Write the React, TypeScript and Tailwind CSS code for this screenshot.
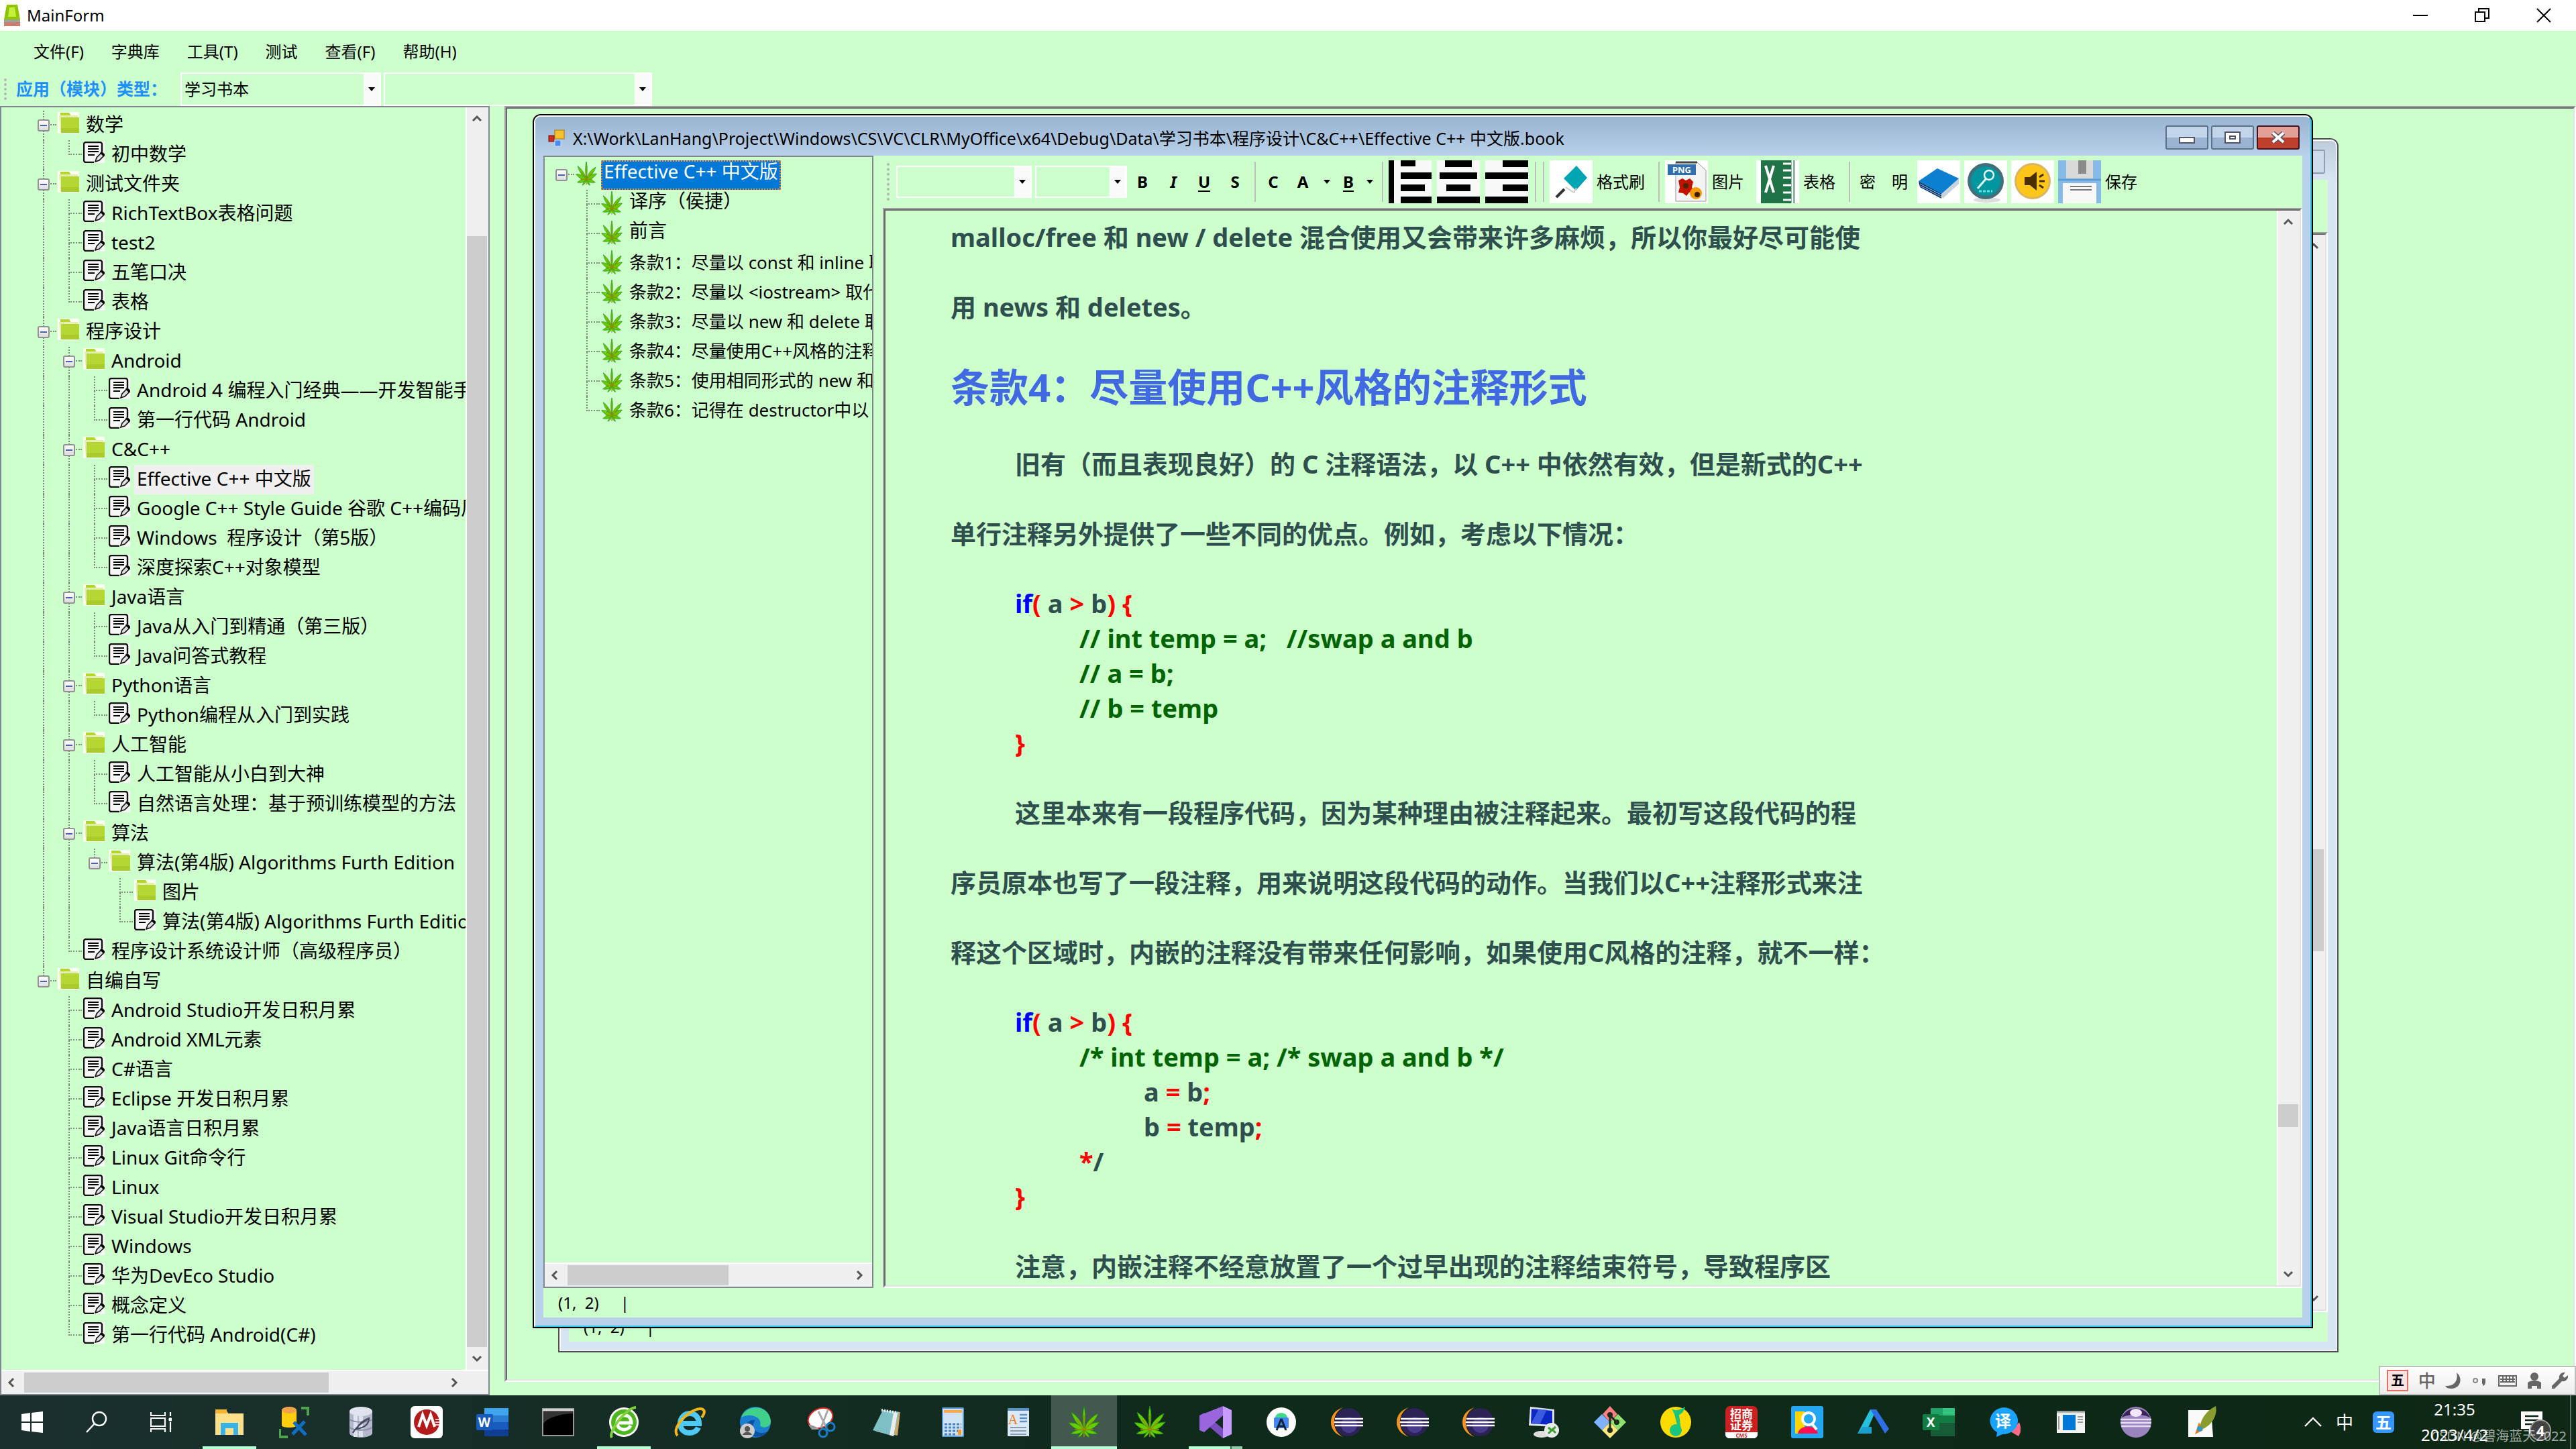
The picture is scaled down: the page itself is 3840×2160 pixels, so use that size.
import type { ReactNode } from "react";

type Kind = "folder" | "doc" | "leaf";

type TreeNode = {
  label: string;
  kind: Kind;
  state?: "marked" | "selected";
  serif?: boolean;
  children?: TreeNode[];
};

type Row = { node: TreeNode; rails: boolean[]; last: boolean; first: boolean };

const doc = (label: string, state?: TreeNode["state"]): TreeNode => ({ label, kind: "doc", state });
const folder = (label: string, children?: TreeNode[]): TreeNode => ({ label, kind: "folder", children });
const leaf = (label: string, serif = false): TreeNode => ({ label, kind: "leaf", serif });

const library: TreeNode[] = [
  folder("数学", [doc("初中数学")]),
  folder("测试文件夹", [doc("RichTextBox表格问题"), doc("test2"), doc("五笔口决"), doc("表格")]),
  folder("程序设计", [
    folder("Android", [doc("Android 4 编程入门经典——开发智能手机应用"), doc("第一行代码 Android")]),
    folder("C&C++", [
      doc("Effective C++ 中文版", "marked"),
      doc("Google C++ Style Guide 谷歌 C++编码风格"),
      doc("Windows  程序设计（第5版）"),
      doc("深度探索C++对象模型"),
    ]),
    folder("Java语言", [doc("Java从入门到精通（第三版）"), doc("Java问答式教程")]),
    folder("Python语言", [doc("Python编程从入门到实践")]),
    folder("人工智能", [doc("人工智能从小白到大神"), doc("自然语言处理：基于预训练模型的方法")]),
    folder("算法", [
      folder("算法(第4版) Algorithms Furth Edition", [
        folder("图片"),
        doc("算法(第4版) Algorithms Furth Edition"),
      ]),
    ]),
    doc("程序设计系统设计师（高级程序员）"),
  ]),
  folder("自编自写", [
    doc("Android Studio开发日积月累"),
    doc("Android XML元素"),
    doc("C#语言"),
    doc("Eclipse 开发日积月累"),
    doc("Java语言日积月累"),
    doc("Linux Git命令行"),
    doc("Linux"),
    doc("Visual Studio开发日积月累"),
    doc("Windows"),
    doc("华为DevEco Studio"),
    doc("概念定义"),
    doc("第一行代码 Android(C#)"),
  ]),
];

const chapters: TreeNode[] = [
  {
    label: "Effective C++ 中文版",
    kind: "leaf",
    state: "selected",
    serif: true,
    children: [
      leaf("译序（侯捷）", true),
      leaf("前言", true),
      leaf("条款1：尽量以 const 和 inline 取代"),
      leaf("条款2：尽量以 <iostream> 取代"),
      leaf("条款3：尽量以 new 和 delete 取代"),
      leaf("条款4：尽量使用C++风格的注释"),
      leaf("条款5：使用相同形式的 new 和"),
      leaf("条款6：记得在 destructor中以"),
    ],
  },
];

function flatten(nodes: TreeNode[], rails: boolean[] = []): Row[] {
  return nodes.flatMap((node, i) => {
    const last = i === nodes.length - 1;
    const row = { node, rails, last, first: i === 0 };
    return [row, ...flatten(node.children ?? [], [...rails, !last])];
  });
}

/* ---------- tree ---------- */

function FolderIcon() {
  return (
    <svg viewBox="0 0 32 32" className="h-8 w-8">
      <rect width="32" height="32" fill="#fbfdf0" />
      <path d="M4 1h13l3 5H4z" fill="#b4d62c" />
      <path d="M2 5h28v25H4z" fill="#e3efb0" />
      <path d="M5 8h27v23H5z" fill="#b5d733" />
      <path d="M5 24h27v7H5z" fill="#aacb2c" />
    </svg>
  );
}

function DocIcon() {
  return (
    <svg viewBox="0 0 32 32" className="h-8 w-8">
      <rect width="32" height="32" fill="#f6f6f6" />
      <path
        d="M28 15V4a3 3 0 0 0-3-3H4a3 3 0 0 0-3 3v24a3 3 0 0 0 3 3h12"
        fill="none"
        stroke="#111"
        strokeWidth="2.4"
      />
      <path d="M7 7h16M7 11h16M7 15h16M7 20h10" stroke="#000" strokeWidth="2" />
      <path d="M18 30l2-6 8-8 4 4-8 8z" fill="#ddd" stroke="#111" strokeWidth="1.6" />
      <path d="M26 16l5 5" stroke="#000" strokeWidth="3" />
    </svg>
  );
}

function LeafIcon({ className }: { className: string }) {
  return (
    <svg viewBox="0 0 48 48" preserveAspectRatio="none" className={className}>
      <g fill="#66cc00" stroke="#1f8a1f" strokeWidth="1">
        <path d="M24 0c3 12 2 24 0 35c-2-11-3-23 0-35z" />
        <path d="M24 35C15 29 8 20 5 9c9 6 16 15 19 26z" />
        <path d="M24 35c9-6 17-13 21-24c-10 5-18 13-21 24z" />
        <path d="M24 36C16 37 8 33 1 25c10-1 18 3 23 11z" />
        <path d="M24 36c8 1 16-3 23-12c-10 0-18 4-23 12z" />
        <path d="M24 36c-6-2-13 0-20 5c8 2 15 0 20-5z" />
        <path d="M24 36c6-2 13 0 20 5c-8 2-15 0-20-5z" />
        <path d="M24 36c-4 2-7 6-9 11c5-2 8-6 9-11zM24 36c4 2 7 6 8 11c-5-2-8-6-8-11z" />
      </g>
      <path d="M24 14v32M13 20l11 16l13-14M10 35h28" stroke="#a08c00" strokeWidth="1.6" fill="none" />
    </svg>
  );
}

function NodeIcon({ kind }: { kind: Kind }) {
  if (kind === "folder") return <FolderIcon />;
  if (kind === "doc") return <DocIcon />;
  return <LeafIcon className="h-9 w-8" />;
}

function Rail({ on }: { on: boolean }) {
  return (
    <span className="flex h-full w-[38px] shrink-0 pl-[18px]">
      {on && <span className="h-full border-l-2 border-dotted border-[#7d8a7d]" />}
    </span>
  );
}

function TreeRow({ node, rails, last, first }: Row) {
  const topless = first && rails.length === 0 && last;
  return (
    <li className="flex h-11 whitespace-pre">
      {rails.map((on, i) => (
        <Rail key={i} on={on} />
      ))}
      <span className="relative flex h-full w-[38px] shrink-0 flex-col pl-[18px]">
        <span
          className={`h-[22px] border-b-2 border-dotted border-[#7d8a7d] ${topless ? "" : "border-l-2"}`}
        />
        {!last && <span className="h-[22px] border-l-2 border-dotted border-[#7d8a7d]" />}
        {node.children && (
          <button
            aria-label={`折叠 ${node.label}`}
            className="absolute top-[13px] left-2.5 flex h-[18px] w-[18px] items-center justify-center rounded-[3px] border-2 border-[#919191] bg-linear-to-b from-white to-[#dcdcdc]"
          >
            <span className="h-0.5 w-2.5 bg-[#4b63a7]" />
          </button>
        )}
      </span>
      <span className="mt-0.5 ml-0.5 h-8 w-8 shrink-0">
        <NodeIcon kind={node.kind} />
      </span>
      {node.serif ? (
        <span
          className={`ml-1.5 h-11 px-1 text-[28px] leading-8 ${
            node.state === "selected" ? "bg-[#0078d7] text-white outline-2 -outline-offset-2 outline-dotted outline-[#ff8728]" : ""
          }`}
        >
          {node.label}
        </span>
      ) : (
        <span
          className={`ml-1.5 h-11 px-1 leading-10 ${node.kind === "leaf" ? "text-[26px]" : "text-[28px]"} ${
            node.state === "marked" ? "bg-[#f0f0f0]" : ""
          }`}
        >
          {node.label}
        </span>
      )}
    </li>
  );
}

function Tree({ nodes, className }: { nodes: TreeNode[]; className: string }) {
  return (
    <ul className={`min-w-0 flex-1 overflow-hidden pt-[5px] ${className}`}>
      {flatten(nodes).map((row, i) => (
        <TreeRow key={i} {...row} />
      ))}
    </ul>
  );
}

/* ---------- common controls ---------- */

const arrows = {
  up: "M4 13l6-6l6 6",
  down: "M4 7l6 6l6-6",
  left: "M13 4l-6 6l6 6",
  right: "M7 4l6 6l-6 6",
};

function ScrollButton({ dir }: { dir: keyof typeof arrows }) {
  return (
    <button aria-label={dir} className="flex h-[34px] w-[30px] shrink-0 items-center justify-center">
      <svg viewBox="0 0 20 20" className="h-5 w-5">
        <path d={arrows[dir]} fill="none" stroke="#555" strokeWidth="3" />
      </svg>
    </button>
  );
}

function Combo({ label, value, className }: { label: string; value: string; className: string }) {
  return (
    <span className={`flex shrink-0 border-2 border-white ${className}`}>
      <select aria-label={label} className="min-w-0 flex-1 appearance-none bg-transparent pl-1 text-[24px] outline-none">
        <option>{value}</option>
      </select>
      <span className="pointer-events-none flex w-6 items-center justify-center bg-[#fafafa]">
        <Caret />
      </span>
    </span>
  );
}

function Caret() {
  return (
    <svg viewBox="0 0 10 6" className="h-1.5 w-2.5">
      <path d="M0 0h10L5 6z" />
    </svg>
  );
}

function Grip({ className }: { className: string }) {
  return <span className={`shrink-0 border-l-4 border-dotted border-[#b5b5b5] ${className}`} />;
}

/* ---------- editor toolbar ---------- */

function AlignIcon({ bars }: { bars: [number, number][] }) {
  return (
    <svg viewBox="0 0 64 64" className="h-16 w-16 bg-[#f8f8f8]">
      {bars.map(([x, w], i) => (
        <rect key={i} x={x} y={[0, 18, 36, 54][i]} width={w} height="10" />
      ))}
    </svg>
  );
}

function BrushIcon() {
  return (
    <svg viewBox="0 0 64 64" className="h-16 w-16 bg-white">
      <path d="M40 8l16 18l-17 19l-18-18z" fill="#00a5b4" />
      <path d="M24 40l12 8l4-7" fill="none" stroke="#ccc" strokeWidth="2" />
      <path d="M22 43L10 55" stroke="#333" strokeWidth="4" />
    </svg>
  );
}

function PngIcon() {
  return (
    <svg viewBox="0 0 64 64" className="h-16 w-16 bg-white">
      <path d="M16 3h32l13 12v46H16z" fill="#f3f3f3" stroke="#999" />
      <path d="M16 3h32" stroke="#444" strokeWidth="3" />
      <rect x="4" y="6" width="42" height="16" fill="#2f6fb0" />
      <text x="25" y="19" textAnchor="middle" fontSize="13" fontWeight="bold" fill="#fff">
        PNG
      </text>
      <path d="M20 30l6-3l5 3l6-3l5 5l-2 8l3 6l-7 2l-4 5l-5-4l-7-1l2-8z" fill="#c41200" />
      <circle cx="31" cy="38" r="4" fill="#4a2500" />
      <circle cx="46" cy="49" r="9" fill="#f59b00" />
      <circle cx="48" cy="51" r="4" fill="#3b2000" />
    </svg>
  );
}

function SheetIcon() {
  return (
    <svg viewBox="0 0 64 64" className="h-16 w-16 bg-white">
      <path d="M7 0h50v64H7z" fill="#1f7346" />
      <path d="M40 5h12M40 15h12M40 26h12M40 37h12M40 48h12M40 59h12M54 0v64" stroke="#fff" strokeWidth="3" />
      <path d="M14 8l12 40M26 8L14 48" stroke="#fff" strokeWidth="4" />
    </svg>
  );
}

function BookIcon() {
  return (
    <svg viewBox="0 0 64 64" className="h-16 w-16 bg-white">
      <path d="M2 31l34 18v8L4 40z" fill="#0a3a70" />
      <path d="M36 49l26-22v8L38 57z" fill="#c9d3dd" />
      <path d="M30 12l32 15l-26 23L2 31z" fill="#0c7fd0" />
      <path d="M4 35l33 17M4 38l33 17" stroke="#9db7d1" />
    </svg>
  );
}

function SearchIcon() {
  return (
    <svg viewBox="0 0 64 64" className="h-16 w-16 bg-white">
      <ellipse cx="34" cy="59" rx="20" ry="4" fill="#ddd" />
      <circle cx="32" cy="31" r="27" fill="#41707a" />
      <circle cx="32" cy="31" r="22" fill="#00969f" />
      <circle cx="37" cy="22" r="7" fill="none" stroke="#e8ffff" strokeWidth="2.5" />
      <path d="M32 28L20 42" stroke="#e8ffff" strokeWidth="3" />
      <path d="M22 46h20" stroke="#6be0e4" strokeWidth="3" strokeDasharray="4 2" />
    </svg>
  );
}

function SoundIcon() {
  return (
    <svg viewBox="0 0 64 64" className="h-16 w-16 bg-white">
      <circle cx="32" cy="31" r="27" fill="#d9b562" />
      <circle cx="32" cy="31" r="24" fill="#ffc61a" />
      <path d="M20 25h8l10-8v28l-10-8h-8z" fill="#4a3000" />
      <path d="M42 25l6-4M42 31h8M42 37l6 4" stroke="#4a3000" strokeWidth="3" />
    </svg>
  );
}

function SaveIcon() {
  return (
    <svg viewBox="0 0 64 64" className="h-16 w-16">
      <rect width="64" height="64" fill="#86bbe8" />
      <rect x="12" width="40" height="27" fill="#d9d9d9" />
      <rect x="30" width="12" height="20" fill="#8b8b8b" />
      <rect x="7" y="34" width="50" height="30" fill="#f8f8f8" />
      <path d="M18 39h32M18 44h32" stroke="#777" strokeWidth="2" />
      <path d="M0 29h64" stroke="#5f9fd6" strokeWidth="3" />
    </svg>
  );
}

function Sep({ className }: { className: string }) {
  return <span className={`h-[60px] w-0.5 shrink-0 bg-[#bdbdbd] ${className}`} />;
}

function Tool({ icon, text, className = "" }: { icon: ReactNode; text?: string; className?: string }) {
  return (
    <button className={`flex shrink-0 items-center gap-1.5 ${className}`} aria-label={text ?? "工具"}>
      {icon}
      {text}
    </button>
  );
}

function EditorToolbar() {
  return (
    <div className="flex h-[78px] shrink-0 items-center overflow-hidden text-[24px] whitespace-nowrap">
      <Grip className="ml-1.5 h-14" />
      <Combo label="字体" value="" className="ml-2.5 h-12 w-[202px]" />
      <Combo label="字号" value="" className="ml-[5px] h-12 w-[137px]" />
      {["B", "I", "U", "S"].map((t) => (
        <button
          key={t}
          className={`w-[46px] font-bold ${t === "I" ? "italic" : ""} ${t === "U" ? "underline underline-offset-4" : ""}`}
        >
          {t}
        </button>
      ))}
      <Sep className="mx-1.5" />
      <button className="w-10 font-bold">C</button>
      <button className="w-12 font-bold">A</button>
      <button aria-label="文字颜色" className="flex w-6 justify-center">
        <Caret />
      </button>
      <button className="w-10 font-bold underline underline-offset-4">B</button>
      <button aria-label="背景颜色" className="flex w-6 justify-center">
        <Caret />
      </button>
      <Sep className="mx-1.5" />
      <div className="ml-0.5 flex gap-2">
        <Tool
          icon={
            <span className="flex border-l-8 border-black">
              <svg viewBox="0 0 56 64" className="h-16 w-14 bg-[#f8f8f8]">
                <path d="M10 0h22v9H10zM10 18h46v10H10zM10 36h36v10H10zM10 54h46v10H10z" />
              </svg>
            </span>
          }
        />
        <Tool icon={<AlignIcon bars={[[12, 40], [4, 56], [14, 36], [0, 64]]} />} />
        <Tool icon={<AlignIcon bars={[[26, 38], [0, 64], [26, 38], [0, 64]]} />} />
      </div>
      <Sep className="ml-2.5" />
      <Sep className="ml-2.5" />
      <Tool icon={<BrushIcon />} text="格式刷" className="ml-2" />
      <Sep className="ml-5" />
      <Tool icon={<PngIcon />} text="图片" className="ml-2" />
      <Tool icon={<SheetIcon />} text="表格" className="ml-[18px]" />
      <Sep className="ml-5" />
      <button className="ml-3.5">密</button>
      <button className="ml-6">明</button>
      <div className="ml-3.5 flex gap-1.5">
        <Tool icon={<BookIcon />} />
        <Tool icon={<SearchIcon />} />
        <Tool icon={<SoundIcon />} />
        <Tool icon={<SaveIcon />} text="保存" />
      </div>
    </div>
  );
}

/* ---------- book text ---------- */

const tones = {
  plain: "",
  key: "text-[#0000ff]",
  op: "text-[#ff0000]",
  note: "text-[#006400]",
};

type Span = [string, keyof typeof tones];

const indents = ["", "pl-24", "pl-48", "pl-72"];

function Line({ spans, indent = 0, wide = false }: { spans: Span[]; indent?: number; wide?: boolean }) {
  return (
    <p className={`h-[52px] text-[38px] leading-[52px] ${indents[indent]} ${wide ? "mt-[52px]" : ""}`}>
      {spans.map(([text, tone], i) => (
        <span key={i} className={tones[tone]}>
          {text}
        </span>
      ))}
    </p>
  );
}

const ifLine: Span[] = [
  ["if", "key"],
  ["(", "op"],
  [" a ", "plain"],
  [">", "op"],
  [" b", "plain"],
  [") {", "op"],
];

function BookText() {
  return (
    <article className="min-w-0 flex-1 overflow-hidden pt-[13px] pl-[97px] font-bold whitespace-pre text-[#2f4f4f]">
      <Line spans={[["malloc/free 和 new / delete 混合使用又会带来许多麻烦，所以你最好尽可能使", "plain"]]} />
      <Line wide spans={[["用 news 和 deletes。", "plain"]]} />
      <h1 className="mt-[58px] h-[72px] text-[58px] leading-[72px] text-[#4169e1]">条款4：尽量使用C++风格的注释形式</h1>
      <Line wide indent={1} spans={[["旧有（而且表现良好）的 C 注释语法，以 C++ 中依然有效，但是新式的C++", "plain"]]} />
      <Line wide spans={[["单行注释另外提供了一些不同的优点。例如，考虑以下情况：", "plain"]]} />
      <Line wide indent={1} spans={ifLine} />
      <Line indent={2} spans={[["// int temp = a;   //swap a and b", "note"]]} />
      <Line indent={2} spans={[["// a = b;", "note"]]} />
      <Line indent={2} spans={[["// b = temp", "note"]]} />
      <Line indent={1} spans={[["}", "op"]]} />
      <Line wide indent={1} spans={[["这里本来有一段程序代码，因为某种理由被注释起来。最初写这段代码的程", "plain"]]} />
      <Line wide spans={[["序员原本也写了一段注释，用来说明这段代码的动作。当我们以C++注释形式来注", "plain"]]} />
      <Line wide spans={[["释这个区域时，内嵌的注释没有带来任何影响，如果使用C风格的注释，就不一样：", "plain"]]} />
      <Line wide indent={1} spans={ifLine} />
      <Line indent={2} spans={[["/* int temp = a; /* swap a and b */", "note"]]} />
      <Line indent={3} spans={[["a ", "plain"], ["=", "op"], [" b", "plain"], [";", "op"]]} />
      <Line indent={3} spans={[["b ", "plain"], ["=", "op"], [" temp", "plain"], [";", "op"]]} />
      <Line indent={2} spans={[["*", "op"], ["/", "plain"]]} />
      <Line indent={1} spans={[["}", "op"]]} />
      <Line wide indent={1} spans={[["注意，内嵌注释不经意放置了一个过早出现的注释结束符号，导致程序区", "plain"]]} />
    </article>
  );
}

/* ---------- MDI windows ---------- */

function Sunken({ children, className = "" }: { children: ReactNode; className?: string }) {
  return (
    <div className={`flex border-2 border-t-[#a0a0a0] border-r-white border-b-white border-l-[#a0a0a0] ${className}`}>
      <div className="relative flex min-w-0 flex-1 border-2 border-t-[#696969] border-r-[#e3e3e3] border-b-[#e3e3e3] border-l-[#696969]">
        {children}
      </div>
    </div>
  );
}

function FormIcon() {
  return (
    <svg viewBox="0 0 28 28" className="mt-1.5 h-7 w-7">
      <rect x="11" y="2" width="14" height="13" fill="#f6c12c" stroke="#a87500" />
      <rect x="2" y="10" width="8" height="9" fill="#cc2a1c" stroke="#7c0e06" />
      <rect x="11" y="17" width="9" height="9" fill="#4d8bf0" stroke="#c9dcff" />
    </svg>
  );
}

function CaptionButtons({ active }: { active: boolean }) {
  const base = "flex h-9 w-16 items-center justify-center rounded-[3px] border-2";
  const blue = active
    ? "border-[#5d7089] bg-linear-to-b from-[#c3d5ea] from-50% to-[#9ab4d2] to-50%"
    : "border-[#8e9fb5] bg-[#cddbeb]";
  const red = active ? "border-[#431422] bg-linear-to-b from-[#e3a096] from-50% to-[#bd3f2c] to-50%" : blue;
  return (
    <div className="mt-1 flex gap-1">
      <button aria-label="最小化" className={`${base} ${blue}`}>
        <span className="mt-2 h-2.5 w-6 border-2 border-[#535666] bg-white" />
      </button>
      <button aria-label="还原" className={`${base} ${blue}`}>
        <span className="flex h-[18px] w-6 items-center justify-center border-2 border-[#535666] bg-white">
          <span className="h-1.5 w-2.5 border-2 border-[#535666]" />
        </span>
      </button>
      <button aria-label="关闭" className={`${base} ${red}`}>
        <svg viewBox="0 0 24 18" className="h-[18px] w-6">
          <path d="M4 2l16 14M20 2L4 16" stroke="#535666" strokeWidth="7" />
          <path d="M4 2l16 14M20 2L4 16" stroke="#fff" strokeWidth="4" />
        </svg>
      </button>
    </div>
  );
}

function BookWindow({ active, className, children }: { active: boolean; className: string; children: ReactNode }) {
  return (
    <section
      className={`absolute flex flex-col rounded-t-xl border-2 ${active ? "border-black bg-[#b9d1ea]" : "border-[#4f4f4f] bg-[#d7e4f2]"} ${className}`}
    >
      <div
        className={`flex min-h-0 flex-1 flex-col rounded-t-[10px] border-2 border-t-white border-l-white ${
          active ? "border-r-[#28c8e8] border-b-[#28c8e8]" : "border-r-[#eaf1f8] border-b-[#eaf1f8]"
        }`}
      >
        <header
          className={`flex h-[58px] shrink-0 items-center rounded-t-lg pr-4 pl-[18px] ${
            active ? "bg-linear-to-b from-[#99b4d1] to-[#b9d1ea]" : "bg-linear-to-b from-[#bfcddb] to-[#d7e4f2]"
          }`}
        >
          <FormIcon />
          <h2 className="mt-2 ml-2.5 min-w-0 flex-1 truncate text-[25px]">
            X:\Work\LanHang\Project\Windows\CS\VC\CLR\MyOffice\x64\Debug\Data\学习书本\程序设计\C&amp;C++\Effective C++
            中文版.book
          </h2>
          <CaptionButtons active={active} />
        </header>
        <div className="mx-3 mb-3 flex min-h-0 flex-1 flex-col bg-[#ccffcc]">
          <div className="flex min-h-0 flex-1 gap-3.5">{children}</div>
          <footer className="flex h-11 shrink-0 items-center gap-8 pl-[22px] text-[24px] whitespace-pre">
            <span>(1,  2)</span>
            <span>|</span>
          </footer>
        </div>
      </div>
    </section>
  );
}

function EditorScroll({ gap, thumb }: { gap: string; thumb: string }) {
  return (
    <div className="flex w-[34px] shrink-0 flex-col border-l-2 border-white bg-[#f0f0f0]">
      <ScrollButton dir="up" />
      <div className="flex-1">
        <div className={gap} />
        <div className={`w-[30px] bg-[#cdcdcd] ${thumb}`} />
      </div>
      <ScrollButton dir="down" />
    </div>
  );
}

function Workspace() {
  return (
    <Sunken className="mb-5 ml-[22px] min-w-0 flex-1">
      <BookWindow active={false} className="top-11 right-[350px] bottom-10 left-[76px]">
        <div className="flex flex-1 flex-col pt-[78px]">
          <Sunken className="min-h-0 flex-1">
            <div className="flex-1" />
            <EditorScroll gap="h-[882px]" thumb="h-[152px]" />
          </Sunken>
        </div>
      </BookWindow>
      <BookWindow active className="top-2 right-[388px] bottom-[76px] left-[38px]">
        <aside className="flex w-[492px] shrink-0 flex-col border-2 border-[#828790]">
          <Tree nodes={chapters} className="pl-1.5" />
          <div className="flex h-9 shrink-0 items-center border-t-2 border-white bg-[#f0f0f0]">
            <ScrollButton dir="left" />
            <div className="ml-1 h-[30px] w-[240px] bg-[#cdcdcd]" />
            <div className="flex-1" />
            <ScrollButton dir="right" />
            <div className="w-1" />
          </div>
        </aside>
        <div className="flex min-w-0 flex-1 flex-col">
          <EditorToolbar />
          <Sunken className="min-h-0 flex-1">
            <BookText />
            <EditorScroll gap="h-[1298px]" thumb="h-[34px]" />
          </Sunken>
        </div>
      </BookWindow>
    </Sunken>
  );
}

/* ---------- taskbar ---------- */

function Eclipse() {
  return (
    <>
      <path d="M18 2C6 6 0 14 0 24s6 18 18 22C8 40 5 33 5 24S8 8 18 2z" fill="#f7941e" />
      <circle cx="26" cy="24" r="21" fill="#2c2255" />
      <circle cx="27" cy="28" r="12" fill="#463a8c" />
      <path d="M6 19h42M5 24h43M6 29h42" stroke="#fff" strokeWidth="2.6" />
    </>
  );
}

const hemp = <LeafIcon className="h-12 w-12" />;

const apps: { name: string; art: ReactNode; run?: "bar" | "active" | "multi" }[] = [
  {
    name: "文件资源管理器",
    run: "bar",
    art: (
      <>
        <path d="M3 7h17l2 4h23v32H3z" fill="#ffe08a" />
        <path d="M3 5h17v6H3z" fill="#f3b52c" />
        <path d="M11 43V25h26v18h-7V33H18v10z" fill="#37b3ea" />
      </>
    ),
  },
  {
    name: "数据库工具",
    art: (
      <>
        <path d="M4 5v24c0 4 22 4 22 0V5z" fill="#ffcf0d" />
        <ellipse cx="15" cy="6" rx="11" ry="5" fill="#f1a24d" />
        <path d="M33 3h10v11M1 34v12h12" fill="none" stroke="#4ca34c" strokeWidth="4" />
        <path d="M20 42l18-19M22 24l18 19" stroke="#0f6fc0" strokeWidth="5" />
      </>
    ),
  },
  {
    name: "SQLite",
    art: (
      <>
        <path d="M7 8v32c0 9 34 9 34 0V8z" fill="#b4b8cc" />
        <path d="M16 12v34M24 12v34" stroke="#dfe1ee" strokeWidth="6" />
        <ellipse cx="24" cy="8" rx="17" ry="7" fill="#e0e2ee" />
        <path d="M7 20c8 5 26 5 34 0M7 32c8 5 26 5 34 0" stroke="#8b90a6" strokeWidth="2" fill="none" />
        <path d="M12 40c4-8 12-14 24-22M18 34c2-6 8-12 18-16c0 8-6 14-18 16z" fill="none" stroke="#474d60" strokeWidth="2.2" />
      </>
    ),
  },
  {
    name: "招商银行",
    art: (
      <>
        <rect width="48" height="48" rx="6" fill="#fff" />
        <circle cx="24" cy="24" r="19" fill="#b51a1a" />
        <path d="M12 31l6-18l6 16l6-16l6 18" stroke="#fff" strokeWidth="4" fill="none" />
        <path d="M37 20h6M37 24h7M37 28h6" stroke="#fff" strokeWidth="1.5" />
      </>
    ),
  },
  {
    name: "Word",
    art: (
      <>
        <path d="M12 3h36v11H12z" fill="#41a5ee" />
        <path d="M12 14h36v10H12z" fill="#2b7cd3" />
        <path d="M12 24h36v11H12z" fill="#185abd" />
        <path d="M12 35h36v10H12z" fill="#103f91" />
        <rect y="12" width="25" height="24" rx="2" fill="#185abd" />
        <text x="12" y="31" textAnchor="middle" fontSize="19" fontWeight="bold" fill="#fff">
          W
        </text>
      </>
    ),
  },
  {
    name: "命令提示符",
    art: (
      <>
        <rect x="1" y="4" width="46" height="40" fill="#000" stroke="#999" strokeWidth="2" />
        <path d="M1 6h46" stroke="#ddd" strokeWidth="3" />
        <path d="M2 26C10 16 28 12 46 11V8H2z" fill="#333" />
      </>
    ),
  },
  {
    name: "360浏览器",
    run: "bar",
    art: (
      <>
        <circle cx="24" cy="24" r="22" fill="#fff" />
        <circle cx="24" cy="24" r="19" fill="#4db61c" />
        <path d="M14 25h21c0-16-21-14-21 0c0 12 16 13 20 4" stroke="#fff" strokeWidth="5" fill="none" />
        <path d="M6 47C0 38 28 2 42 2" stroke="#7fd23a" strokeWidth="4" fill="none" />
      </>
    ),
  },
  {
    name: "Internet Explorer",
    art: (
      <>
        <path d="M11 26h27c0-21-28-19-28 0c0 17 22 18 27 6" stroke="#4ec8f5" strokeWidth="8" fill="none" />
        <path d="M6 44C-6 32 30-2 44 5c4 3 1 8-2 12" stroke="#f3b51c" strokeWidth="4" fill="none" />
      </>
    ),
  },
  {
    name: "Edge",
    art: (
      <>
        <circle cx="24" cy="24" r="23" fill="#1b7fd0" />
        <path d="M3 17C9-3 44-4 47 22c1 10-12 12-16 7c4-12-14-20-28-12z" fill="#3fd08a" />
        <path d="M24 21c-10 12 4 24 18 17c-8 12-30 10-32-6c0-8 6-12 14-11z" fill="#0c50a0" />
        <circle cx="12" cy="37" r="11" fill="#ccc" />
        <circle cx="12" cy="34" r="4" fill="#555" />
        <path d="M5 43c2-6 12-6 14 0z" fill="#555" />
      </>
    ),
  },
  {
    name: "截图工具",
    art: (
      <>
        <ellipse cx="23" cy="18" rx="19" ry="14" fill="#fff" stroke="#d93025" strokeWidth="2" transform="rotate(-25 23 18)" />
        <path d="M5 28c8 0 14 4 16 7H10z" fill="#999" />
        <path d="M20 8l12 24M34 6L24 32" stroke="#aaa" strokeWidth="3" />
        <circle cx="38" cy="31" r="6" fill="none" stroke="#1a7dc8" strokeWidth="3" />
        <circle cx="27" cy="40" r="6" fill="none" stroke="#1a7dc8" strokeWidth="3" />
      </>
    ),
  },
  {
    name: "记事本",
    art: (
      <>
        <path d="M18 6l26 3l-4 35l-32-6z" fill="#c9a568" />
        <path d="M18 6l24 3l-8 36L3 36z" fill="#7fbfc6" />
        <path d="M16 6l24 4" stroke="#eee" strokeWidth="4" strokeDasharray="2 2" />
        <path d="M34 10l6 0l-6 35l-6-2z" fill="#e8eeee" />
      </>
    ),
  },
  {
    name: "计算器",
    art: (
      <>
        <rect x="8" y="2" width="33" height="44" rx="2" fill="#5b9bd5" />
        <rect x="10" y="4" width="29" height="40" fill="#cfe3f5" />
        <rect x="11" y="6" width="27" height="4" fill="#f7a94b" />
        <path d="M12 27h25M12 32h25M12 37h25M12 42h18" stroke="#4c84bd" strokeWidth="3" strokeDasharray="4 2" />
        <rect x="32" y="35" width="5" height="8" fill="#f59b2c" />
      </>
    ),
  },
  {
    name: "写字板",
    art: (
      <>
        <path d="M8 3h32v42H8z" fill="#dbe8f5" />
        <path d="M8 3h32v4H8z" fill="#5b93c9" />
        <text x="16" y="27" textAnchor="middle" fontSize="20" fontFamily="Liberation Serif" fill="#f07f13">
          A
        </text>
        <path d="M26 13h11M26 18h11M26 23h11" stroke="#5b93c9" strokeWidth="2.4" />
        <path d="M12 32h24M12 37h24M12 42h24" stroke="#8a9cad" strokeWidth="2" />
      </>
    ),
  },
  { name: "MyOffice", run: "active", art: hemp },
  { name: "MyOffice 2", art: hemp },
  {
    name: "Visual Studio",
    run: "multi",
    art: (
      <>
        <path d="M0 14l7-4l28 24V48L0 18z" fill="#7b4fc0" />
        <path d="M0 14v22l7 3L35 14V0z" fill="#9a66dd" />
        <path d="M35 0l13 6v36l-13 6z" fill="#c79bff" />
      </>
    ),
  },
  {
    name: "Android Studio",
    art: (
      <>
        <circle cx="24" cy="24" r="22" fill="#fff" />
        <path d="M15 17c1-9 17-9 18 0z" fill="#3ddc84" />
        <rect x="13" y="17" width="22" height="16" rx="2" fill="#4285f4" />
        <path d="M24 19l-7 17M24 19l7 17M19 30h10" stroke="#123" strokeWidth="3" fill="none" />
      </>
    ),
  },
  { name: "Eclipse", art: <Eclipse /> },
  { name: "Eclipse 2", art: <Eclipse /> },
  { name: "Eclipse 3", art: <Eclipse /> },
  {
    name: "远程桌面",
    art: (
      <>
        <path d="M3 1l36 4v26L1 29z" fill="#dfe3ea" />
        <path d="M5 4l31 3v21L4 26z" fill="#0b26c4" />
        <path d="M16 4l12 1l-10 21l-13-1z" fill="#5b7ef0" opacity="0.6" />
        <ellipse cx="20" cy="42" rx="12" ry="5" fill="#ddd" />
        <circle cx="35" cy="36" r="11" fill="#e9ebe9" />
        <path d="M30 32l5 4l-5 5M41 31l-5 4l5 5" stroke="#3ca02e" strokeWidth="3" fill="none" />
      </>
    ),
  },
  {
    name: "Git",
    art: (
      <>
        <path d="M24 0l11 12l-11 12L13 12z" fill="#ff7f7f" />
        <path d="M12 12l12 12l-12 12L0 24z" fill="#80b3ff" />
        <path d="M36 12l12 12l-12 12l-12-12z" fill="#8fe070" />
        <path d="M24 24l12 12l-12 12l-12-12z" fill="#ffe680" />
        <path d="M24 12v24M24 14l10 10" stroke="#1b2a1b" strokeWidth="3" />
        <circle cx="24" cy="13" r="4" fill="#1b2a1b" />
        <circle cx="24" cy="36" r="4" fill="#1b2a1b" />
        <circle cx="34" cy="24" r="4" fill="#1b2a1b" />
      </>
    ),
  },
  {
    name: "QQ音乐",
    art: (
      <>
        <circle cx="24" cy="24" r="23" fill="#ffdc00" />
        <path d="M18 4c6 4 12 2 20-3c-1 7-6 11-9 12l3 23h-4L22 12z" fill="#1ac481" />
        <circle cx="24" cy="36" r="9" fill="#1ac481" />
      </>
    ),
  },
  {
    name: "招商证券",
    art: (
      <>
        <rect width="48" height="48" rx="7" fill="#cc1f1f" />
        <path d="M0 39h48v3c0 4-3 6-6 6H6c-3 0-6-2-6-6z" fill="#fff" />
        <g fontSize="17" fontWeight="bold" fill="#fff" textAnchor="middle">
          <text x="24" y="18">招商</text>
          <text x="24" y="35">证券</text>
        </g>
        <text x="24" y="47" fontSize="8" fontWeight="bold" fill="#cc1f1f" textAnchor="middle">
          CMS
        </text>
      </>
    ),
  },
  {
    name: "远程协助",
    art: (
      <>
        <rect width="48" height="48" rx="3" fill="#22a7f0" />
        <path d="M6 8h14v33H6z" fill="#ffd400" />
        <path d="M10 41c2-14 28-14 30 0z" fill="#ff0f4f" />
        <circle cx="26" cy="19" r="9" fill="#22a7f0" stroke="#fff" strokeWidth="4" />
        <path d="M31 26l7 9" stroke="#fff" strokeWidth="4" />
      </>
    ),
  },
  {
    name: "阿里云盘",
    art: (
      <>
        <path d="M20 5h9L13 41H1z" fill="#27c1e0" />
        <path d="M20 5h9l19 29l-6 7z" fill="#2f6fe6" />
        <path d="M1 41l8-10h13v10z" fill="#1aa0d0" />
      </>
    ),
  },
  {
    name: "Excel",
    art: (
      <>
        <path d="M12 3h18v11H12z" fill="#21a366" />
        <path d="M30 3h18v11H30z" fill="#33c481" />
        <path d="M12 14h36v11H12z" fill="#107c41" />
        <path d="M12 25h36v20H12z" fill="#185c37" />
        <rect y="12" width="25" height="24" rx="2" fill="#107c41" />
        <text x="12" y="31" textAnchor="middle" fontSize="19" fontWeight="bold" fill="#fff">
          X
        </text>
      </>
    ),
  },
  {
    name: "翻译",
    art: (
      <>
        <path d="M46 24c4 10 2 16-1 21l-12-7z" fill="#ff6b86" />
        <path d="M23 2a22 20 0 1 1-2 40l-9 4l1-7A22 20 0 0 1 23 2z" fill="#1aa3ff" />
        <text x="22" y="31" textAnchor="middle" fontSize="24" fontWeight="bold" fill="#fff">
          译
        </text>
      </>
    ),
  },
  {
    name: "窗口工具",
    art: (
      <>
        <rect x="4" y="8" width="42" height="32" fill="#f4f4f4" />
        <path d="M4 9h42" stroke="#bbb" strokeWidth="3" />
        <rect x="13" y="13" width="19" height="23" fill="#0078d7" />
        <path d="M7 15v20M35 16h8M35 20h8M35 24h8" stroke="#999" strokeWidth="2" />
      </>
    ),
  },
  {
    name: "Eclipse 旧版",
    art: (
      <>
        <circle cx="24" cy="24" r="23" fill="#9a84bf" />
        <path d="M3 17a23 23 0 0 1 42 0c-12-6-30-6-42 0z" fill="#3a2458" />
        <ellipse cx="24" cy="10" rx="9" ry="6" fill="#f0e8fa" />
        <path d="M1 20h46M1 25h46M2 30h44" stroke="#e7def5" strokeWidth="2.4" />
      </>
    ),
  },
  {
    name: "编辑器",
    art: (
      <>
        <path d="M4 6h34l3 40H4z" fill="#fafafa" />
        <path d="M45 0c3 14-6 30-24 36c0-14 8-28 24-36z" fill="#8a9c2e" />
        <path d="M20 24l6 12l-12 6z" fill="#f07a1a" />
        <circle cx="21" cy="34" r="4" fill="#2b9bd0" />
      </>
    ),
  },
];

function TaskButton({ name, art, run }: (typeof apps)[number]) {
  return (
    <button
      aria-label={name}
      className={`flex h-20 w-[98px] shrink-0 flex-col items-center justify-start pt-4 ${run === "active" ? "bg-[#43584e]" : ""}`}
    >
      {art === hemp ? (
        hemp
      ) : (
        <svg viewBox="0 0 48 48" className="h-12 w-12">
          {art}
        </svg>
      )}
      {run && (
        <span className={`mt-3 flex h-1 bg-[#b4ffd5] ${run === "active" ? "w-full" : "w-20"}`}>
          {run === "multi" && <span className="ml-auto w-[18px] border-l-2 border-[#3d6b52] bg-[#8ecba8]" />}
        </span>
      )}
    </button>
  );
}

function ImeBar() {
  return (
    <div className="absolute right-0 bottom-20 flex h-11 w-[294px] items-center justify-between border-2 border-[#bdbdbd] bg-linear-to-b from-white to-[#ececec] px-2.5 text-[26px] font-medium text-[#666]">
      <span className="flex h-8 w-8 items-center justify-center border-2 border-[#e07060] bg-[#f6e4e4] text-[20px] font-bold text-black">
        五
      </span>
      <span>中</span>
      <svg viewBox="0 0 24 24" className="h-6 w-6" fill="#666">
        <path d="M17 0c10 8 6 24-8 24c-4 0-7-1-9-4c12 1 20-6 17-20z" />
      </svg>
      <svg viewBox="0 0 24 24" className="h-6 w-6" fill="#666">
        <circle cx="6" cy="12" r="3" fill="none" stroke="#888" strokeWidth="2" />
        <path d="M16 9h5v5c0 3-1 5-4 6v-3h-1z" />
      </svg>
      <svg viewBox="0 0 30 20" className="h-5 w-[30px]" fill="none" stroke="#666" strokeWidth="2">
        <path d="M2 3h26v15H2zM4 8h22M4 12h22M8 3v10M13 3v10M18 3v10M23 3v10" />
      </svg>
      <svg viewBox="0 0 22 24" className="h-6 w-[22px]" fill="#666">
        <circle cx="11" cy="6" r="6" />
        <path d="M1 24V15c4-4 16-4 20 0v9h-6v-4H7v4z" />
      </svg>
      <svg viewBox="0 0 24 24" className="h-6 w-6" fill="#666">
        <path d="M0 20L11 9c-1-6 4-10 9-9l-4 5l3 3l5-4c1 6-4 10-9 9L4 24H0z" />
      </svg>
    </div>
  );
}

function Taskbar() {
  return (
    <footer className="flex h-20 shrink-0 overflow-hidden bg-linear-to-r from-[#1b302f] via-[#0e2a1a] to-[#0e2815] text-white">
      <div className="mr-[5px] flex">
        <button aria-label="开始" className="flex w-24 items-center justify-center">
          <svg viewBox="0 0 32 32" className="h-8 w-8" fill="#fff">
            <path d="M0 4l13-2v13H0zM15 2l17-2v15H15zM0 17h13v13L0 28zM15 17h17v15l-17-2z" />
          </svg>
        </button>
        <button aria-label="搜索" className="flex w-24 items-center justify-center">
          <svg viewBox="0 0 32 32" className="h-8 w-8" fill="none" stroke="#fff" strokeWidth="2.4">
            <circle cx="20" cy="11" r="10" />
            <path d="M13 18L1 31" />
          </svg>
        </button>
        <button aria-label="任务视图" className="flex w-24 items-center justify-center">
          <svg viewBox="0 0 32 32" className="h-8 w-8" fill="none" stroke="#fff" strokeWidth="2.2">
            <path d="M1 1v5h21V1M1 31v-5h21v5M1 10h21v12H1zM30 1v6M30 16v15" />
            <circle cx="30" cy="12" r="1.6" fill="#fff" />
          </svg>
        </button>
      </div>
      {apps.map((app) => (
        <TaskButton key={app.name} {...app} />
      ))}
      <div className="relative ml-auto flex items-center pr-[7px]">
        <button aria-label="显示隐藏的图标" className="mr-5">
          <svg viewBox="0 0 26 16" className="h-4 w-[26px]" fill="none" stroke="#fff" strokeWidth="2.4">
            <path d="M1 14L13 2l12 12" />
          </svg>
        </button>
        <button className="mr-7 w-7 text-[26px]">中</button>
        <button className="mr-8 flex h-8 w-8 items-center justify-center rounded-md bg-[#3597ff] text-[24px] font-bold">
          五
        </button>
        <time className="mr-10 flex w-[116px] flex-col items-center text-[24px] leading-[38px]">
          <span>21:35</span>
          <span>2023/4/2</span>
        </time>
        <button aria-label="通知" className="relative mr-10 h-9 w-[34px]">
          <svg viewBox="0 0 34 36" className="h-9 w-[34px]">
            <path d="M1 2h32v26H21l-8 8v-8H1z" fill="#fff" />
            <path d="M7 9h20M7 15h20M7 21h14" stroke="#0c2817" strokeWidth="2.4" />
          </svg>
          <span className="absolute top-3.5 left-3.5 flex h-8 w-8 items-center justify-center rounded-full border-2 border-[#999] bg-[#444] text-[22px] font-bold">
            4
          </span>
        </button>
        <span className="h-full border-l-2 border-[#5f7265]" />
        <span className="absolute right-3.5 bottom-1 text-[20px] whitespace-nowrap text-white/60">
          CSDN @碧海蓝天2022
        </span>
      </div>
    </footer>
  );
}

/* ---------- main form ---------- */

const menus = ["文件(F)", "字典库", "工具(T)", "测试", "查看(F)", "帮助(H)"];

function TitleBar() {
  return (
    <header className="flex h-[46px] shrink-0 items-center bg-white pl-1.5">
      <svg viewBox="0 0 24 32" className="h-8 w-6">
        <path d="M4 0h16l4 22H0z" fill="#8fc400" />
        <path d="M8 4h8l2 14H6z" fill="#c4f03c" />
        <path d="M0 22h24v4H0z" fill="#9aa69a" />
        <path d="M0 26h24v6H0z" fill="#c9806e" />
      </svg>
      <h1 className="ml-2.5 flex-1 text-[24px]">MainForm</h1>
      <div className="mr-0.5 flex">
        {["M0 11h22", "M1 6h14v14H1zM6 6V1h15v14h-6", "M1 1l20 20M21 1L1 21"].map((d, i) => (
          <button key={d} aria-label={["最小化", "还原", "关闭"][i]} className="flex w-[92px] justify-center">
            <svg viewBox="0 0 22 22" className="h-[22px] w-[22px]" fill="none" stroke="#000" strokeWidth="2">
              <path d={d} />
            </svg>
          </button>
        ))}
      </div>
    </header>
  );
}

export default function App() {
  return (
    <div
      lang="zh-CN"
      className="relative flex min-h-screen flex-col bg-[#ccffcc] font-['Noto_Sans','Noto_Sans_CJK_SC',sans-serif] text-black"
    >
      <TitleBar />
      <nav className="flex h-[62px] shrink-0 items-center gap-px pl-[30px] text-[24px]">
        {menus.map((m) => (
          <button key={m} className="px-5">
            {m}
          </button>
        ))}
      </nav>
      <div className="flex h-[50px] shrink-0 items-stretch">
        <Grip className="ml-1.5 h-8 self-center" />
        <span className="w-[259px] self-center pl-3.5 text-[25px] font-bold whitespace-nowrap text-[#1e90ff]">
          应用（模块）类型：
        </span>
        <Combo label="应用类型" value="学习书本" className="w-[299px]" />
        <Combo label="模块" value="" className="ml-1 w-[400px]" />
      </div>
      <main className="flex flex-1">
        <aside className="flex w-[730px] shrink-0 flex-col border-2 border-[#828790]">
          <div className="flex flex-1">
            <Tree nodes={library} className="pl-11" />
            <div className="flex w-[34px] shrink-0 flex-col border-l-2 border-white bg-[#f0f0f0]">
              <ScrollButton dir="up" />
              <div className="h-[158px]" />
              <div className="w-[30px] flex-1 bg-[#cdcdcd]" />
              <ScrollButton dir="down" />
            </div>
          </div>
          <div className="flex h-9 items-center border-t-2 border-white bg-[#f0f0f0]">
            <ScrollButton dir="left" />
            <div className="ml-1 h-[30px] w-[454px] bg-[#cdcdcd]" />
            <div className="flex-1" />
            <ScrollButton dir="right" />
            <div className="w-9" />
          </div>
        </aside>
        <Workspace />
      </main>
      <ImeBar />
      <Taskbar />
    </div>
  );
}
